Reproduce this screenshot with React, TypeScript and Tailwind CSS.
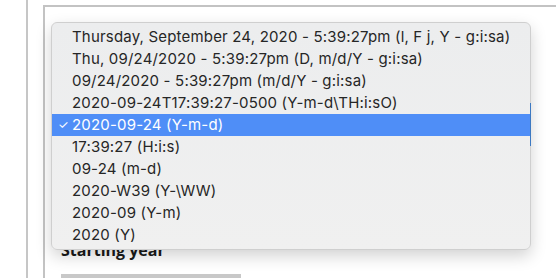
import React from "react";

const options = [
  "Thursday, September 24, 2020 - 5:39:27pm (l, F j, Y - g:i:sa)",
  "Thu, 09/24/2020 - 5:39:27pm (D, m/d/Y - g:i:sa)",
  "09/24/2020 - 5:39:27pm (m/d/Y - g:i:sa)",
  "2020-09-24T17:39:27-0500 (Y-m-d\\TH:i:sO)",
  "2020-09-24 (Y-m-d)",
  "17:39:27 (H:i:s)",
  "09-24 (m-d)",
  "2020-W39 (Y-\\WW)",
  "2020-09 (Y-m)",
  "2020 (Y)",
];

const selected = 4;

function FormatMenu() {
  return (
    <div
      className="absolute left-[51px] top-[22px] w-[480px] h-[228px] flex flex-col rounded-[6px] border border-[#cfcfcf] bg-gradient-to-b from-[#ecedee] to-[#f0f0f0] shadow-[0_6px_16px_rgba(0,0,0,0.18)] pt-[3px] overflow-hidden"
      style={{ fontFamily: "Inter, 'Liberation Sans', sans-serif" }}
    >
      {options.map((opt, i) => (
        <div
          key={opt}
          className={`flex items-center h-[22px] text-[15px] tracking-[0.18px] whitespace-nowrap ${
            i === selected ? "bg-[#4f8ef7] text-white" : "text-[#262626]"
          }`}
        >
          <span className="w-[20px] pl-[6px] text-[12px]">{i === selected ? "✓" : ""}</span>
          <span>{opt}</span>
        </div>
      ))}
    </div>
  );
}

export default function App() {
  return (
    <div
      className="relative w-[556px] h-[278px] bg-white overflow-hidden"
      style={{ fontFamily: '"Liberation Sans", Arial, sans-serif' }}
    >
      <div className="flex h-full pl-[26px]">
        <div className="flex flex-1 border-l-2 border-[#c6c6c6] pl-[15px] pt-[5px]">
          <div className="flex flex-1 flex-col border-l-2 border-t-2 border-[#c3c3c3] pl-[16px] pt-[233px]">
            <div
              className="text-[16px] font-bold leading-[20px] text-[#1a1a1a]"
              style={{ fontFamily: '"Open Sans", "Noto Sans", sans-serif' }}
            >
              Starting year
            </div>
            <div className="mt-[14px] w-[180px] h-[30px] border-2 border-[#c8c8c8]" />
          </div>
        </div>
      </div>
      <FormatMenu />
      <div className="absolute left-[530px] top-[103px] w-[1px] h-[43px] bg-[#3d79c2]" />
    </div>
  );
}
